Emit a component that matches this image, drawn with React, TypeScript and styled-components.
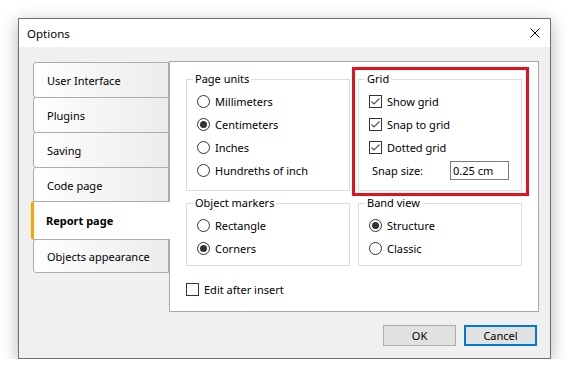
import styled, { createGlobalStyle } from "styled-components";

const GlobalStyle = createGlobalStyle`
  html, body {
    margin: 0;
    background: #fff;
  }
  body {
    font-family: "Segoe UI", "Noto Sans", sans-serif;
    font-size: 11px;
    color: #000;
  }
`;

const Page = styled.div`
  padding: 18px 0 0 18px;
`;

const Window = styled.div`
  width: 533px;
  height: 341px;
  box-sizing: border-box;
  border: 1px solid #707070;
  background: #f0f0f0;
  box-shadow: 0 4px 16px rgba(0, 0, 0, 0.3);
  display: flex;
  flex-direction: column;
`;

const TitleBar = styled.div`
  height: 28px;
  background: #fff;
  display: flex;
  align-items: center;
  justify-content: space-between;
  padding: 0 10px 0 8px;
  font-size: 11.5px;
`;

const CloseButton = styled.div`
  width: 10px;
  height: 10px;
  display: flex;
`;

const Body = styled.div`
  flex: 1;
  padding: 14px 11px 12px 14px;
  display: flex;
  flex-direction: column;
`;

const Content = styled.div`
  display: flex;
`;

const TabList = styled.div`
  width: 136px;
  padding-top: 1px;
  display: flex;
  flex-direction: column;
`;

const Tab = styled.div<{ $active?: boolean }>`
  position: relative;
  box-sizing: border-box;
  height: ${(p) => (p.$active ? "39px" : "36px")};
  margin-top: ${(p) => (p.$active ? "-2px" : "-1px")};
  display: flex;
  align-items: center;
  padding-left: ${(p) => (p.$active ? "12px" : "13px")};
  border: 1px solid #adadad;
  border-radius: 3px 0 0 3px;
  background: linear-gradient(to right, #fefefe, #ececec);
  &:first-child {
    margin-top: 0;
  }
  ${(p) =>
    p.$active &&
    `
    z-index: 1;
    margin-left: -2px;
    margin-right: -1px;
    border-left: 3px solid #f7a600;
    border-right: none;
    background: #fff;
    font-weight: bold;
    & + div {
      height: 34px;
    }
  `}
`;

const Panel = styled.div`
  width: 370px;
  height: 251px;
  box-sizing: border-box;
  border: 1px solid #a9a9a9;
  background: #fff;
  padding: 9px 16px 0 16px;
`;

const GroupGrid = styled.div`
  display: grid;
  grid-template-columns: 164px 164px;
  column-gap: 8px;
  row-gap: 4px;
`;

const Group = styled.fieldset<{ $bottom?: number }>`
  margin: 0;
  min-width: 0;
  border: 1px solid #dcdcdc;
  padding: 3px 0 ${(p) => p.$bottom ?? 8}px 10px;
`;

const Legend = styled.legend`
  margin-left: -4px;
  padding: 0 2px;
  line-height: 16px;
`;

const Highlighted = styled.div`
  position: relative;
  display: flex;
  flex-direction: column;
`;

const RedFrame = styled.div`
  position: absolute;
  top: -4px;
  left: -6px;
  right: -7px;
  bottom: -5px;
  border: 3px solid #e3121d;
  pointer-events: none;
`;

const Row = styled.div`
  height: 23px;
  display: flex;
  align-items: center;
  gap: 5px;
`;

const RadioCircle = styled.span<{ $checked?: boolean }>`
  width: 13px;
  height: 13px;
  box-sizing: border-box;
  border: 1px solid #333;
  border-radius: 50%;
  background: #fff;
  display: flex;
  align-items: center;
  justify-content: center;
  &::after {
    content: "";
    display: ${(p) => (p.$checked ? "block" : "none")};
    width: 7px;
    height: 7px;
    border-radius: 50%;
    background: #333;
  }
`;

const CheckBox = styled.span`
  width: 13px;
  height: 13px;
  box-sizing: border-box;
  border: 1px solid #333;
  background: #fff;
  display: flex;
`;

const SnapRow = styled.div`
  height: 23px;
  display: flex;
  align-items: center;
  padding-left: 3px;
  padding-right: 12px;
  justify-content: space-between;
`;

const SnapInput = styled.div`
  width: 59px;
  height: 19px;
  box-sizing: border-box;
  border: 1px solid #7a7a7a;
  background: #fff;
  display: flex;
  align-items: center;
  padding-left: 2px;
`;

const EditRow = styled(Row)`
  margin-top: 12px;
`;

const Footer = styled.div`
  display: flex;
  justify-content: flex-end;
  gap: 8px;
  margin-top: 13px;
  padding-right: 2px;
`;

const Button = styled.div<{ $default?: boolean }>`
  width: 73px;
  height: 21px;
  box-sizing: border-box;
  display: flex;
  align-items: center;
  justify-content: center;
  background: #e1e1e1;
  border: ${(p) => (p.$default ? "2px solid #0078d7" : "1px solid #adadad")};
`;

const Radio = ({ label, checked }: { label: string; checked?: boolean }) => (
  <Row>
    <RadioCircle $checked={checked} />
    {label}
  </Row>
);

const Check = ({ label, checked }: { label: string; checked?: boolean }) => (
  <Row>
    <CheckBox>
      {checked && (
        <svg width="11" height="11" viewBox="0 0 11 11">
          <polyline points="1.5,5.5 4,8 9.5,2.5" fill="none" stroke="#555" strokeWidth="1.2" />
        </svg>
      )}
    </CheckBox>
    {label}
  </Row>
);

const tabs = ["User Interface", "Plugins", "Saving", "Code page", "Report page", "Objects appearance"];

export default function App() {
  return (
    <>
      <GlobalStyle />
      <Page>
        <Window>
          <TitleBar>
            <span>Options</span>
            <CloseButton>
              <svg width="10" height="10" viewBox="0 0 10 10">
                <path d="M0.5 0.5 L9.5 9.5 M9.5 0.5 L0.5 9.5" stroke="#000" strokeWidth="1" />
              </svg>
            </CloseButton>
          </TitleBar>
          <Body>
            <Content>
              <TabList>
                {tabs.map((t) => (
                  <Tab key={t} $active={t === "Report page"}>
                    {t}
                  </Tab>
                ))}
              </TabList>
              <Panel>
                <GroupGrid>
                  <Group>
                    <Legend>Page units</Legend>
                    <Radio label="Millimeters" />
                    <Radio label="Centimeters" checked />
                    <Radio label="Inches" />
                    <Radio label="Hundreths of inch" />
                  </Group>
                  <Highlighted>
                    <Group>
                      <Legend>Grid</Legend>
                      <Check label="Show grid" checked />
                      <Check label="Snap to grid" checked />
                      <Check label="Dotted grid" checked />
                      <SnapRow>
                        <span>Snap size:</span>
                        <SnapInput>0.25 cm</SnapInput>
                      </SnapRow>
                    </Group>
                    <RedFrame />
                  </Highlighted>
                  <Group $bottom={5}>
                    <Legend>Object markers</Legend>
                    <Radio label="Rectangle" />
                    <Radio label="Corners" checked />
                  </Group>
                  <Group $bottom={5}>
                    <Legend>Band view</Legend>
                    <Radio label="Structure" checked />
                    <Radio label="Classic" />
                  </Group>
                </GroupGrid>
                <EditRow>
                  <CheckBox />
                  Edit after insert
                </EditRow>
              </Panel>
            </Content>
            <Footer>
              <Button>OK</Button>
              <Button $default>Cancel</Button>
            </Footer>
          </Body>
        </Window>
      </Page>
    </>
  );
}
